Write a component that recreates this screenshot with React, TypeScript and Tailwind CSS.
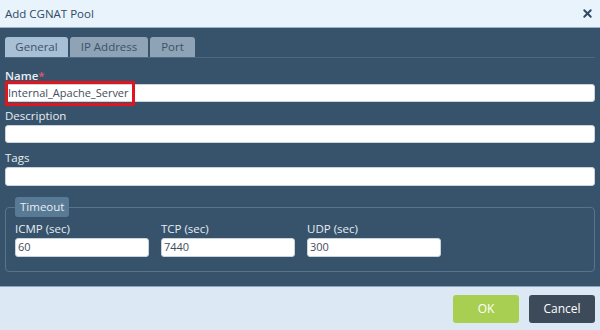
import { X } from 'lucide-react';

const TABS = [
  { label: 'General', w: 'w-[63px]' },
  { label: 'IP Address', w: 'w-[78px]' },
  { label: 'Port', w: 'w-[45px]' },
];

function TextInput({ value = '', className = '' }: { value?: string; className?: string }) {
  return (
    <div
      className={`flex h-[18px] items-center rounded-[3px] border border-[#c9d4de] bg-white px-[2px] text-[11px] text-[#3f4e5c] ${className}`}
    >
      {value}
    </div>
  );
}

export default function App() {
  return (
    <div
      className="flex h-[330px] w-[600px] flex-col bg-[#37536b] text-[11px]"
      style={{ fontFamily: '"Open Sans", "Liberation Sans", sans-serif' }}
    >
      {/* Header */}
      <div className="flex h-[28px] items-center justify-between border-b border-[#9fb3c4] bg-[#e9f3fc] pl-[5px] pr-[6px]">
        <span className="text-[11.5px] text-[#2e4b63]">Add CGNAT Pool</span>
        <X className="h-[13px] w-[13px] text-[#2b4a64]" strokeWidth={3.5} />
      </div>

      {/* Body */}
      <div className="flex flex-1 flex-col px-[5px] pt-[9px]">
        {/* Tabs */}
        <div className="flex gap-[2px] border-b border-[#4a6880]">
          {TABS.map((tab, i) => (
            <div
              key={tab.label}
              className={`flex h-[20px] items-center justify-center rounded-t-[3px] text-[11.5px] text-[#3c5268] ${tab.w} ${
                i === 0 ? 'bg-[#a8c0d5]' : 'bg-[#8ea3b6]'
              }`}
            >
              {tab.label}
            </div>
          ))}
        </div>

        {/* Name */}
        <div className="mt-[11px] text-[11.5px] font-semibold leading-[14px] text-[#e6edf3]">
          Name<span className="text-[#e0566a]">*</span>
        </div>
        <div className="relative mt-[1px]">
          <TextInput value="Internal_Apache_Server" />
          <div className="pointer-events-none absolute left-0 top-[-3px] h-[25px] w-[130px] border-[3px] border-[#e0151f]" />
        </div>

        {/* Description */}
        <div className="mt-[7px] text-[11.5px] leading-[14px] text-[#e6edf3]">Description</div>
        <TextInput className="mt-[2px]" />

        {/* Tags */}
        <div className="mt-[8px] text-[11.5px] leading-[14px] text-[#e6edf3]">Tags</div>
        <TextInput className="mt-[2px] h-[19px]" />

        {/* Timeout */}
        <div className="relative mt-[21px] h-[65px] rounded-[4px] border border-[#56748c] px-[9px] pt-[14px]">
          <div className="absolute left-[9px] top-[-11px] flex h-[20px] items-center rounded-[3px] bg-[#587a94] px-[5px] text-[11.5px] text-[#e6edf3]">
            Timeout
          </div>
          <div className="flex gap-[12px]">
            {[
              ['ICMP (sec)', '60'],
              ['TCP (sec)', '7440'],
              ['UDP (sec)', '300'],
            ].map(([label, val]) => (
              <div key={label} className="w-[134px]">
                <div className="text-[11.5px] leading-[14px] text-[#e6edf3]">{label}</div>
                <TextInput value={val} className="mt-[2px] h-[19px]" />
              </div>
            ))}
          </div>
        </div>
      </div>

      {/* Footer */}
      <div className="flex h-[44px] items-center justify-end gap-[10px] border-t border-[#8fa6ba] bg-[#dce9f5] pr-[5px]">
        <button className="h-[28px] w-[66px] rounded-[3px] bg-[#a8cf52] text-[12px] text-white">OK</button>
        <button className="h-[28px] w-[66px] rounded-[3px] bg-[#3d4a5a] text-[12px] text-white">Cancel</button>
      </div>
    </div>
  );
}
